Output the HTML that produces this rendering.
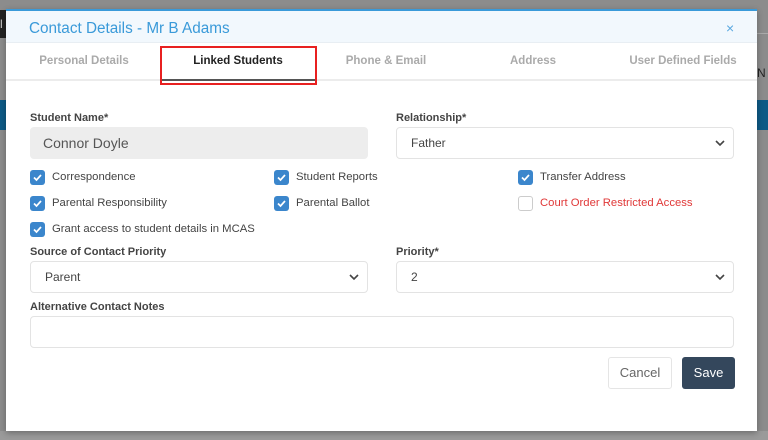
<!DOCTYPE html>
<html><head><meta charset="utf-8"><style>
*{box-sizing:border-box;margin:0;padding:0}
body{width:768px;height:440px;background:#8c8c8c;font-family:"Liberation Sans",sans-serif;position:relative;overflow:hidden}
.a{position:absolute;white-space:nowrap}
.modal{position:absolute;left:6px;top:9px;width:751px;height:422px;background:#fff;border-top:2px solid #3a9ad9;box-shadow:0 2px 6px rgba(0,0,0,.3)}
.lbl{font-size:11px;color:#444;font-weight:bold}
.inp{position:absolute;border:1px solid #e3e3e3;border-radius:4px;background:#fff;font-size:12px;color:#444;padding-left:14px;display:flex;align-items:center}
.cb{position:absolute;width:15px;height:15px;border-radius:3px;background:#3b86cc}
.cb svg{position:absolute;left:2px;top:2px}
.cl{font-size:11.3px;color:#444}
.tab{font-size:11.5px;font-weight:bold;color:#aaa;transform:translateX(-50%)}
.chev{position:absolute;right:8px;top:12px}
</style></head><body>
<div class="a" style="left:0;top:10px;width:8px;height:28px;background:#222;color:#ccc;font-size:12px;line-height:28px">l</div>
<div class="a" style="left:0;top:100px;width:8px;height:30px;background:#0e5a86"></div>
<div class="a" style="left:757px;top:33px;width:11px;height:1px;background:#aaa"></div>
<div class="a" style="left:757px;top:100px;width:11px;height:30px;background:#0e5a86"></div>
<div class="a" style="left:757px;top:66px;font-size:12px;color:#222">N</div>
<div class="a" style="left:0;top:431px;width:768px;height:9px;background:#9a9a9a"></div>
<div class="modal"></div>
<div class="a" style="left:6px;top:11px;width:751px;height:32px;background:#f2f8fd;border-bottom:1px solid #e8eef3"></div>
<div class="a" style="left:29px;top:20px;font-size:15.3px;color:#3a9ad9">Contact Details - Mr B Adams</div>
<div class="a" style="left:726px;top:20px;font-size:14px;color:#5aa8e0">×</div>
<div class="a" style="left:6px;top:79px;width:751px;height:2px;background:#ececec"></div>
<div class="a" style="left:162px;top:79px;width:153px;height:2px;background:#555"></div>
<div class="a" style="left:160px;top:46px;width:157px;height:39px;border:2px solid #e82020"></div>
<div class="a tab" style="left:84px;top:55px">Personal Details</div>
<div class="a tab" style="left:238px;top:55px;color:#222">Linked Students</div>
<div class="a tab" style="left:386px;top:55px">Phone &amp; Email</div>
<div class="a tab" style="left:533px;top:55px">Address</div>
<div class="a tab" style="left:683px;top:55px">User Defined Fields</div>

<div class="a lbl" style="left:30px;top:112px">Student Name*</div>
<div class="inp" style="left:30px;top:127px;width:338px;height:32px;background:#ededed;border-color:#ededed;font-size:14px;color:#555;padding-left:12px">Connor Doyle</div>
<div class="a lbl" style="left:396px;top:112px">Relationship*</div>
<div class="inp" style="left:396px;top:127px;width:338px;height:32px">Father<svg class="chev" width="10" height="7" viewBox="0 0 10 7"><path d="M1 1l4 4 4-4" fill="none" stroke="#444" stroke-width="1.6"/></svg></div>

<div class="cb" style="left:30px;top:170px"><svg width="11" height="11" viewBox="0 0 11 11"><path d="M2 5.5l2.5 2.5 4.5-5" fill="none" stroke="#fff" stroke-width="1.7"/></svg></div>
<div class="a cl" style="left:52px;top:171px">Correspondence</div>
<div class="cb" style="left:274px;top:170px"><svg width="11" height="11" viewBox="0 0 11 11"><path d="M2 5.5l2.5 2.5 4.5-5" fill="none" stroke="#fff" stroke-width="1.7"/></svg></div>
<div class="a cl" style="left:296px;top:171px">Student Reports</div>
<div class="cb" style="left:518px;top:170px"><svg width="11" height="11" viewBox="0 0 11 11"><path d="M2 5.5l2.5 2.5 4.5-5" fill="none" stroke="#fff" stroke-width="1.7"/></svg></div>
<div class="a cl" style="left:540px;top:171px">Transfer Address</div>

<div class="cb" style="left:30px;top:196px"><svg width="11" height="11" viewBox="0 0 11 11"><path d="M2 5.5l2.5 2.5 4.5-5" fill="none" stroke="#fff" stroke-width="1.7"/></svg></div>
<div class="a cl" style="left:52px;top:197px">Parental Responsibility</div>
<div class="cb" style="left:274px;top:196px"><svg width="11" height="11" viewBox="0 0 11 11"><path d="M2 5.5l2.5 2.5 4.5-5" fill="none" stroke="#fff" stroke-width="1.7"/></svg></div>
<div class="a cl" style="left:296px;top:197px">Parental Ballot</div>
<div class="cb" style="left:518px;top:196px;background:#fff;border:1px solid #ccc"></div>
<div class="a cl" style="left:540px;top:197px;color:#e03838">Court Order Restricted Access</div>

<div class="cb" style="left:30px;top:222px"><svg width="11" height="11" viewBox="0 0 11 11"><path d="M2 5.5l2.5 2.5 4.5-5" fill="none" stroke="#fff" stroke-width="1.7"/></svg></div>
<div class="a cl" style="left:52px;top:223px">Grant access to student details in MCAS</div>

<div class="a lbl" style="left:30px;top:246px">Source of Contact Priority</div>
<div class="inp" style="left:30px;top:261px;width:338px;height:32px">Parent<svg class="chev" width="10" height="7" viewBox="0 0 10 7"><path d="M1 1l4 4 4-4" fill="none" stroke="#444" stroke-width="1.6"/></svg></div>
<div class="a lbl" style="left:396px;top:246px">Priority*</div>
<div class="inp" style="left:396px;top:261px;width:338px;height:32px">2<svg class="chev" width="10" height="7" viewBox="0 0 10 7"><path d="M1 1l4 4 4-4" fill="none" stroke="#444" stroke-width="1.6"/></svg></div>

<div class="a lbl" style="left:30px;top:301px">Alternative Contact Notes</div>
<div class="inp" style="left:30px;top:316px;width:704px;height:32px"></div>

<div class="a" style="left:608px;top:357px;width:64px;height:32px;border:1px solid #e5e5e5;border-radius:3px;font-size:13px;color:#666;text-align:center;line-height:30px">Cancel</div>
<div class="a" style="left:682px;top:357px;width:53px;height:32px;background:#34475c;border-radius:3px;font-size:13px;color:#fff;text-align:center;line-height:32px">Save</div>
</body></html>
